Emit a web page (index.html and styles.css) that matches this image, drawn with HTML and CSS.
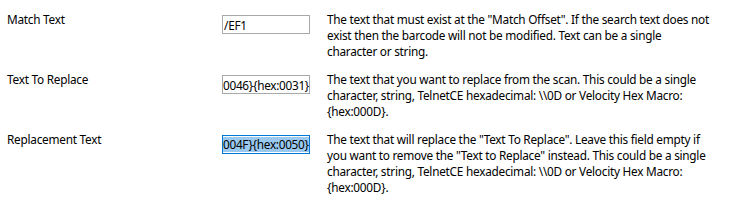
FILE: index.html
```html
<!DOCTYPE html>
<html lang="en">
<head>
    <meta charset="UTF-8">
    <meta name="viewport" content="width=device-width, initial-scale=1.0">
    <title>Replace Text</title>
    <link rel="stylesheet" href="styles.css">
</head>
<body>
    <div class="settings">
        <div class="row">
            <div class="label">Match Text</div>
            <div class="field"><span>/EF1</span></div>
            <div class="desc">The text that must exist at the "Match Offset". If the search text does not exist then the barcode will not be modified. Text can be a single character or string.</div>
        </div>
        <div class="row">
            <div class="label">Text To Replace</div>
            <div class="field scrolled"><span>0046}{hex:0031}</span></div>
            <div class="desc">The text that you want to replace from the scan. This could be a single character, string, TelnetCE hexadecimal: \\0D or Velocity Hex Macro: {hex:000D}.</div>
        </div>
        <div class="row">
            <div class="label">Replacement Text</div>
            <div class="field scrolled focused"><span class="selected">004F}{hex:0050}</span></div>
            <div class="desc">The text that will replace the "Text To Replace". Leave this field empty if you want to remove the "Text to Replace" instead. This could be a single character, string, TelnetCE hexadecimal: \\0D or Velocity Hex Macro: {hex:000D}.</div>
        </div>
    </div>
</body>
</html>
```

FILE: styles.css
```css
body {
    margin: 0;
    background-color: #fff;
    color: #000;
    font-family: "Noto Sans", "Open Sans", sans-serif;
    font-size: 11.8px;
    letter-spacing: -0.25px;
    line-height: 16px;
}
.settings {
    padding: 11px 0 0 7px;
}
.row {
    display: grid;
    grid-template-columns: 215px 88px 385px;
    margin-bottom: 12px;
}
.label {
    white-space: nowrap;
}
.field {
    display: flex;
    align-items: center;
    height: 19px;
    margin-top: 4px;
    box-sizing: border-box;
    border: 1px solid #a9a9a9;
    padding: 0 1px;
    white-space: nowrap;
}
.field.scrolled {
    padding: 0;
    letter-spacing: -0.3px;
}
.field.focused {
    border-color: #0078d7;
}
.selected {
    background-color: #99c9ef;
    line-height: 15px;
}
.desc {
    margin-left: 17px;
    width: 385px;
}
```
